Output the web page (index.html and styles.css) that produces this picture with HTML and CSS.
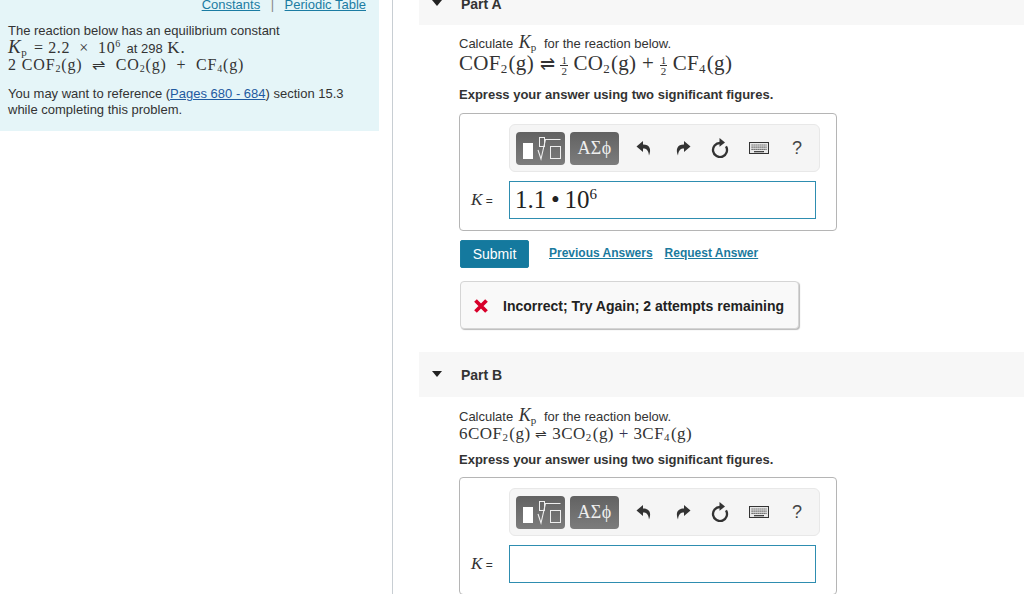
FILE: index.html
```html
<!DOCTYPE html>
<html lang="en">
<head>
<meta charset="utf-8">
<title>Equilibrium constant problem</title>
<link rel="stylesheet" href="styles.css">
</head>
<body>
<svg class="defs" width="0" height="0" aria-hidden="true">
  <symbol id="i-undo" viewBox="0 0 16 16"><path d="M7 1 L0.5 6.5 L7 12 V8.6 C10.5 8.6 12.4 10.2 13 15.5 C15.6 9.5 13.8 4.6 7 4.6 Z"/></symbol>
  <symbol id="i-redo" viewBox="0 0 16 16"><path d="M9 1 L15.5 6.5 L9 12 V8.6 C5.5 8.6 3.6 10.2 3 15.5 C0.4 9.5 2.2 4.6 9 4.6 Z"/></symbol>
  <symbol id="i-reset" viewBox="0 0 18 20"><path d="M9 5 A7 7 0 1 0 15 8.4" fill="none" stroke="currentColor" stroke-width="2.3"/><path d="M8.5 0 L14 4.6 L8.5 8.8 Z"/></symbol>
  <symbol id="i-keys" viewBox="0 0 20 12"><rect x="0.5" y="0.5" width="19" height="11" fill="#e8e8e8" stroke="#333"/><path d="M2.5 3h15M2.5 5.2h15M2.5 7.4h15" stroke="#444" stroke-width="1.2" stroke-dasharray="1.2 .8" fill="none"/><path d="M5 9.7h10" stroke="#333" stroke-width="1.2"/></symbol>
  <symbol id="i-tpl" viewBox="0 0 49 33"><rect x="7" y="11" width="10" height="16" fill="#fff"/><rect x="23.5" y="5.5" width="5" height="9" fill="none" stroke="#eee"/><path d="M22 18 L25 27 L29.5 7.5 H44.5" fill="none" stroke="#eee" stroke-width="1.1"/><rect x="34.5" y="14.5" width="10" height="12" fill="none" stroke="#eee"/></symbol>
</svg>
<div class="page">
  <aside class="left">
    <section class="intro">
      <nav class="toplinks"><a href="#">Constants</a><span class="sep">|</span><a href="#">Periodic Table</a></nav>
      <p class="given">The reaction below has an equilibrium constant<br>
        <span class="m ln1"><i class="v">K</i><sub>p</sub> = 2.2 &nbsp;× &nbsp;10<sup>6</sup></span> at 298 <span class="m unit">K.</span><br>
        <span class="m wide">2 COF<sub class="t">2</sub>(g) &nbsp;⇌ &nbsp;CO<sub class="t">2</sub>(g) &nbsp;+ &nbsp;CF<sub class="t">4</sub>(g)</span></p>
      <p class="ref">You may want to reference (<a href="#">Pages 680 - 684</a>) section 15.3<br>while completing this problem.</p>
    </section>
  </aside>
  <main class="right">
    <section class="part part-a">
      <header class="part-head"><span class="caret"></span><h2>Part A</h2></header>
      <div class="part-body">
        <p class="calc">Calculate <span class="kp"><i class="v">K</i><sub>p</sub></span> for the reaction below.</p>
        <p class="eq big">COF<sub>2</sub>(g) <span class="arrow">⇌</span> <span class="frac"><span>1</span><span>2</span></span> CO<sub>2</sub>(g) + <span class="frac"><span>1</span><span>2</span></span> CF<sub>4</sub>(g)</p>
        <p class="express">Express your answer using two significant figures.</p>
        <div class="answer">
          <div class="toolbar">
            <button class="tbtn"><svg class="tpl" width="49" height="33"><use href="#i-tpl"/></svg></button>
            <button class="tbtn greek">ΑΣϕ</button>
            <svg class="ico i1" width="16" height="16"><use href="#i-undo"/></svg>
            <svg class="ico i2" width="16" height="16"><use href="#i-redo"/></svg>
            <svg class="ico i3" width="18" height="20"><use href="#i-reset"/></svg>
            <svg class="ico i4" width="20" height="12"><use href="#i-keys"/></svg>
            <span class="help">?</span>
          </div>
          <div class="inputrow">
            <label class="klabel"><i>K</i> <span>=</span></label>
            <div class="input">1.1 • 10<sup>6</sup></div>
          </div>
        </div>
        <div class="actions">
          <button class="submit">Submit</button>
          <a href="#">Previous Answers</a>
          <a href="#">Request Answer</a>
        </div>
        <div class="feedback">
          <svg class="xmark" width="14" height="14" viewBox="0 0 14 14"><path d="M1.5 1.5 L12.5 12.5 M12.5 1.5 L1.5 12.5" stroke="#d8002b" stroke-width="3.8"/></svg>
          <span>Incorrect; Try Again; 2 attempts remaining</span>
        </div>
      </div>
    </section>
    <section class="part part-b">
      <header class="part-head"><span class="caret"></span><h2>Part B</h2></header>
      <div class="part-body">
        <p class="calc">Calculate <span class="kp"><i class="v">K</i><sub>p</sub></span> for the reaction below.</p>
        <p class="eq small">6COF<sub class="t">2</sub>(g) <span class="arrow">⇌</span> 3CO<sub class="t">2</sub>(g) <span class="plus">+</span> 3CF<sub class="t">4</sub>(g)</p>
        <p class="express">Express your answer using two significant figures.</p>
        <div class="answer">
          <div class="toolbar">
            <button class="tbtn"><svg class="tpl" width="49" height="33"><use href="#i-tpl"/></svg></button>
            <button class="tbtn greek">ΑΣϕ</button>
            <svg class="ico i1" width="16" height="16"><use href="#i-undo"/></svg>
            <svg class="ico i2" width="16" height="16"><use href="#i-redo"/></svg>
            <svg class="ico i3" width="18" height="20"><use href="#i-reset"/></svg>
            <svg class="ico i4" width="20" height="12"><use href="#i-keys"/></svg>
            <span class="help">?</span>
          </div>
          <div class="inputrow">
            <label class="klabel"><i>K</i> <span>=</span></label>
            <div class="input"></div>
          </div>
        </div>
      </div>
    </section>
  </main>
</div>
</body>
</html>
```
FILE: styles.css
```css
* { box-sizing: border-box; }
html, body { margin: 0; padding: 0; height: 594px; overflow: hidden; background: #fff; }
body { font-family: "Liberation Sans", Arial, sans-serif; font-size: 13px; color: #333; }
.defs { position: absolute; }
p { margin: 0; }
sub, sup { line-height: 0; }

.page { display: flex; height: 594px; overflow: hidden; }
.left { flex: 0 0 393px; border-right: 1px solid #c8ced3; }
.right { flex: 0 0 605px; margin-left: 26px; margin-top: -20px; }

.intro { width: 379px; height: 131px; background: #e5f5f8; padding: 0 8px; display: flow-root; }
.toplinks { height: 15px; margin-top: -3px; padding-right: 5px; display: flex; justify-content: flex-end; gap: 10.5px; font-size: 13px; line-height: 15px; }
.toplinks a { color: #1b7ca3; }
.sep { color: #888; }
.given { margin-top: 11px; line-height: 16px; color: #333; }
.ref { margin-top: 12px; line-height: 16px; }
.ref a { color: #1f5aa0; }
.m { font-family: "Liberation Serif", serif; font-size: 16px; }
.m.ln1 { letter-spacing: .6px; }
.m.wide { letter-spacing: .85px; }
.m.unit { font-size: 17px; letter-spacing: 1px; margin-left: 1px; }
.v { font-family: "Liberation Serif", serif; font-style: italic; }
.m .v { font-size: 19px; }
.m sub { font-size: 11px; vertical-align: -3px; margin-right: 2px; }
.m sup { font-size: 10px; vertical-align: 6px; margin-right: 2px; }
.m .t { font-size: 10px; vertical-align: -2px; margin-right: 0; }

.part-head { height: 45px; background: #f7f7f7; display: flex; align-items: center; padding-left: 13px; }
.caret { width: 0; height: 0; border-left: 5.5px solid transparent; border-right: 5.5px solid transparent; border-top: 6px solid #222; margin-right: 18px; }
h2 { margin: 2px 0 0 1px; font-size: 14px; font-weight: bold; color: #333; }
.part-body { padding: 0 0 0 40px; display: flow-root; }

.calc { margin-top: 8px; line-height: 18px; font-size: 13px; }
.part-b .calc { margin-top: 9px; }
.kp { font-size: 18px; font-family: "Liberation Serif", serif; margin: 0 4px 0 2px; }
.kp sub { font-size: 11px; vertical-align: -3px; }
.eq { font-family: "Liberation Serif", serif; color: #333; }
.eq.big { font-size: 21px; line-height: 22px; margin-top: -1px; letter-spacing: .3px; }
.eq.big sub { font-size: 13px; vertical-align: -3px; margin-right: 1px; }
.eq.small { font-size: 17px; line-height: 18px; margin-top: -1px; letter-spacing: .45px; }
.eq.small .t { font-size: 11px; vertical-align: -2px; margin-right: 1px; }
.arrow { font-size: .85em; }
.plus { color: #335; }
.frac { display: inline-flex; flex-direction: column; align-items: center; vertical-align: middle; font-size: 11px; line-height: 10px; letter-spacing: 0; }
.frac span:first-child { border-bottom: 1px solid #333; padding: 0 1px; }
.express { font-weight: bold; font-size: 13px; line-height: 16px; }
.part-a .express { margin-top: 11px; }
.part-b .express { margin-top: 9px; }

.answer { width: 378px; height: 118px; border: 1px solid #b5b5b5; border-radius: 4px; padding: 10px 16px 0 49px; background: #fff; }
.part-a .answer { margin-top: 10px; }
.part-b .answer { margin-top: 9px; }
.toolbar { height: 48px; width: 311px; background: #f5f5f5; border: 1px solid #e8e8e8; border-radius: 6px; display: flex; align-items: center; padding: 1px 0 0 6px; }
.tbtn { width: 49px; height: 33px; padding: 0; margin-right: 5px; border: 0; border-radius: 4px; background: linear-gradient(#626262, #7c7c7c); color: #eee; display: flex; align-items: center; justify-content: center; font-family: "Liberation Serif", serif; font-size: 18px; }
.tbtn.greek { margin-right: 0; letter-spacing: .4px; }
.ico { color: #333; fill: #333; flex: none; }
.i1 { margin-left: 17px; }
.i2 { margin-left: 23px; }
.i3 { margin-left: 20px; }
.i4 { margin-left: 20px; }
.help { margin-left: 23px; font-size: 18px; color: #444; }

.inputrow { display: flex; align-items: center; margin-top: 9px; position: relative; }
.klabel { position: absolute; left: -38px; font-size: 12px; white-space: nowrap; }
.klabel i { font-family: "Liberation Serif", serif; font-size: 17px; }
.input { width: 307px; height: 38px; border: 1px solid #2e8db0; background: #fff; padding: 0 5px; font-family: "Liberation Serif", serif; font-size: 25px; line-height: 36px; color: #222; word-spacing: -1.5px; }
.input sup { font-size: 15px; vertical-align: 9px; }

.actions { display: flex; align-items: center; margin-top: 9px; padding-left: 1px; height: 28px; }
.submit { width: 69px; height: 28px; background: #14799e; color: #fff; border: 1px solid #1a7da0; border-radius: 2px; font: 14px "Liberation Sans", Arial, sans-serif; padding: 0; margin-right: 20px; }
.actions a { font-weight: bold; font-size: 12px; color: #1a7a9e; margin-right: 12px; position: relative; top: -1px; }
.feedback { width: 339px; height: 48px; margin: 13px 0 0 1px; background: #f9f9f9; border: 1px solid #d5d5d5; border-radius: 4px; box-shadow: 1px 1px 1px #bbb; display: flex; align-items: center; padding: 2px 0 0 13px; font-weight: bold; font-size: 14px; color: #222; }
.xmark { margin-right: 15px; flex: none; }
.part-b { margin-top: 23px; }
```
